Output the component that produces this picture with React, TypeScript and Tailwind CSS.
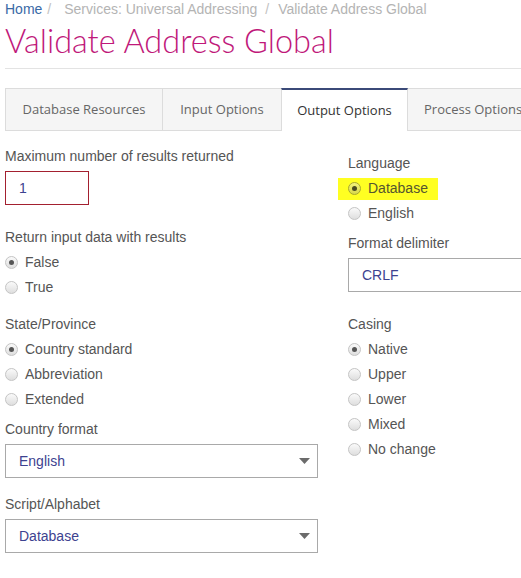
import React from 'react';

const sans = { fontFamily: '"Liberation Sans", Arial, sans-serif' };

const Radio: React.FC<{ label: string; checked?: boolean }> = ({ label, checked }) => (
  <div className="flex h-[25px] items-center">
    <span className="flex h-[13px] w-[13px] items-center justify-center rounded-full border border-[#c4c4c4] bg-gradient-to-b from-[#fafafa] to-[#dedede]">
      {checked && <span className="h-[5px] w-[5px] rounded-full bg-[#555]" />}
    </span>
    <span className="ml-[7px] text-[14px] text-[#555]">{label}</span>
  </div>
);

const Label: React.FC<{ text: string; className?: string }> = ({ text, className = '' }) => (
  <div className={`h-[20px] text-[14px] leading-[20px] text-[#555] ${className}`}>{text}</div>
);

const SelectBox: React.FC<{ value: string; className?: string; arrow?: boolean }> = ({ value, className = '', arrow = true }) => (
  <div className={`flex h-[34px] items-center justify-between border border-[#a9a9a9] bg-white pl-[13px] pr-[7px] ${className}`}>
    <span className="text-[14px] text-[#3d4290]">{value}</span>
    {arrow && (
      <svg width="11" height="6" viewBox="0 0 11 6">
        <path d="M0 0 H11 L5.5 6 Z" fill="#6b6b6b" />
      </svg>
    )}
  </div>
);

const tabs = [
  { label: 'Database Resources', w: 'w-[157px]' },
  { label: 'Input Options', w: 'w-[119px]' },
  { label: 'Output Options', w: 'w-[127px]', active: true },
];

export default function App() {
  return (
    <div className="h-[578px] w-[521px] overflow-hidden bg-white pl-[5px]" style={sans}>
      <div className="flex h-[18px] items-center whitespace-nowrap text-[14px] leading-[18px]">
        <span className="text-[#3a6aa6]">Home</span>
        <span className="ml-[5px] text-[#c2c2c2]">/</span>
        <span className="ml-[13px] text-[#b4b4b4]">Services: Universal Addressing</span>
        <span className="ml-[8px] text-[#c2c2c2]">/</span>
        <span className="ml-[9px] text-[#b4b4b4]">Validate Address Global</span>
      </div>

      <h1
        className="h-[46px] whitespace-nowrap text-[32.5px] font-light leading-[46px] text-[#c0187a]"
        style={{ fontFamily: 'Lato, "Open Sans", sans-serif' }}
      >
        Validate Address Global
      </h1>

      <div className="mt-[4px] w-[560px] border-t border-[#e3e3e3]" />

      <div className="mt-[19px] flex h-[43px] w-[600px]" style={{ fontFamily: '"Open Sans", sans-serif' }}>
        {tabs.map(t =>
          t.active ? (
            <div
              key={t.label}
              className={`${t.w} flex shrink-0 items-center justify-center border-x border-t-2 border-x-[#dcdcdc] border-t-[#3b4a78] bg-white text-[13px] text-[#333]`}
            >
              {t.label}
            </div>
          ) : (
            <div
              key={t.label}
              className={`${t.w} flex shrink-0 items-center justify-center border border-r-0 border-[#dcdcdc] bg-[#f5f5f5] text-[13px] text-[#666]`}
            >
              {t.label}
            </div>
          )
        )}
        <div className="flex w-[140px] shrink-0 items-center border border-l-0 border-[#dcdcdc] bg-[#f5f5f5] pl-[16px] text-[13px] whitespace-nowrap text-[#666]">
          Process Options
        </div>
      </div>

      <div className="flex">
        <div className="w-[313px] shrink-0">
          <Label text="Maximum number of results returned" className="mt-[15px]" />
          <div className="mt-[5px] flex h-[34px] w-[84px] items-center border border-[#a3202f] pl-[13px] text-[14px] text-[#3d4290]">
            1
          </div>
          <Label text="Return input data with results" className="mt-[22px]" />
          <div className="mt-[3px]">
            <Radio label="False" checked />
            <Radio label="True" />
          </div>
          <Label text="State/Province" className="mt-[14px]" />
          <div className="mt-[3px]">
            <Radio label="Country standard" checked />
            <Radio label="Abbreviation" />
            <Radio label="Extended" />
          </div>
          <Label text="Country format" className="mt-[7px]" />
          <SelectBox value="English" className="mt-[5px]" />
          <Label text="Script/Alphabet" className="mt-[16px]" />
          <SelectBox value="Database" className="mt-[5px]" />
        </div>

        <div className="ml-[30px] w-[200px] shrink-0">
          <Label text="Language" className="mt-[22px]" />
          <div className="mt-[3px]">
            <div className="-ml-[10px] flex h-[25px] items-center">
              <div className="flex h-[22px] items-center bg-[#ffff22] pl-[10px] pr-[10px]">
                <span className="flex h-[13px] w-[13px] items-center justify-center rounded-full border border-[#a8a830] bg-gradient-to-b from-[#f4f47a] to-[#d8d84a]">
                  <span className="h-[5px] w-[5px] rounded-full bg-[#4a4a20]" />
                </span>
                <span className="ml-[7px] text-[14px] text-[#555530]">Database</span>
              </div>
            </div>
            <Radio label="English" />
          </div>
          <Label text="Format delimiter" className="mt-[7px]" />
          <SelectBox value="CRLF" className="mt-[5px]" arrow={false} />
          <Label text="Casing" className="mt-[22px]" />
          <div className="mt-[3px]">
            <Radio label="Native" checked />
            <Radio label="Upper" />
            <Radio label="Lower" />
            <Radio label="Mixed" />
            <Radio label="No change" />
          </div>
        </div>
      </div>
    </div>
  );
}
